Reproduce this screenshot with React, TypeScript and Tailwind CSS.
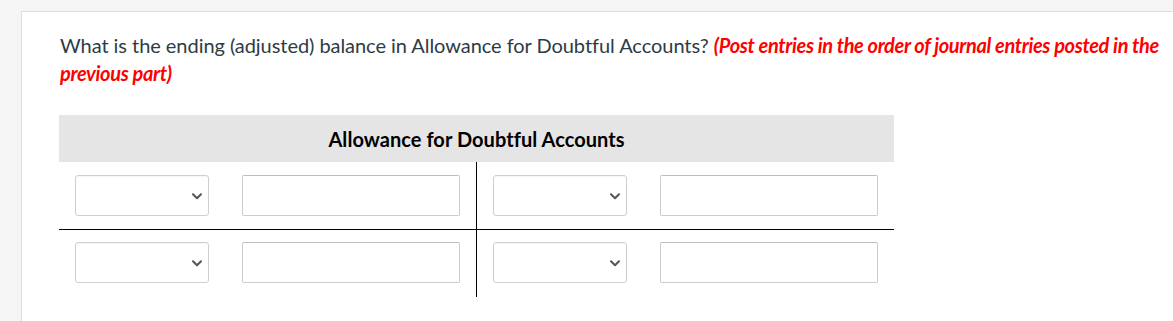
import React from "react";

function Select() {
  return (
    <div className="relative w-[134px] h-[41px] rounded-[3px] border border-[#cfcfcf] bg-white shadow-[inset_0_1px_1px_rgba(0,0,0,0.04)]">
      <svg
        className="absolute right-[6px] top-[17px]"
        width="10"
        height="7"
        viewBox="0 0 10 7"
        fill="none"
      >
        <path d="M1 1.2 L5 5.2 L9 1.2" stroke="#555" strokeWidth="2" strokeLinecap="round" strokeLinejoin="round" />
      </svg>
    </div>
  );
}

function Input() {
  return (
    <div className="w-[218px] h-[41px] rounded-[2px] border border-[#cccccc] border-t-[#bdbdbd] bg-white" />
  );
}

function Cell({ left, row }: { left: boolean; row: number }) {
  return (
    <div
      className={
        "flex items-start gap-[33px] pl-[16px] pr-[16px] " +
        (left ? "border-r border-black " : "") +
        (row === 1 ? "pt-[13px] pb-[13px] border-b border-black" : "pt-[12px] pb-[14px]")
      }
    >
      <Select />
      <Input />
    </div>
  );
}

export default function App() {
  return (
    <div
      className="h-[321px] w-[1173px] overflow-hidden bg-[#f5f5f5] pt-[11px] pl-[21px]"
      style={{ fontFamily: "Lato, 'Noto Sans', sans-serif" }}
    >
      <div className="h-full border-l border-t border-[#dedede] bg-white pl-[37px] pr-[10px] pt-[19px]">
        <p className="text-[20px] leading-[28px] text-[#2d3b45] pl-[1px] tracking-[-0.05px]">
          What is the ending (adjusted) balance in Allowance for Doubtful Accounts?{" "}
          <span className="font-bold italic text-[#ff0000] tracking-[-0.35px]">
            (Post entries in the order of journal entries posted in the previous part)
          </span>
        </p>
        <div className="mt-[28px] w-[835px]">
          <div className="h-[47px] bg-[#e5e5e5] flex items-center justify-center text-[20px] font-bold text-black tracking-[0.05px]">
            Allowance for Doubtful Accounts
          </div>
          <div className="grid grid-cols-[418px_417px]">
            <Cell left row={1} />
            <Cell left={false} row={1} />
            <Cell left row={2} />
            <Cell left={false} row={2} />
          </div>
        </div>
      </div>
    </div>
  );
}
